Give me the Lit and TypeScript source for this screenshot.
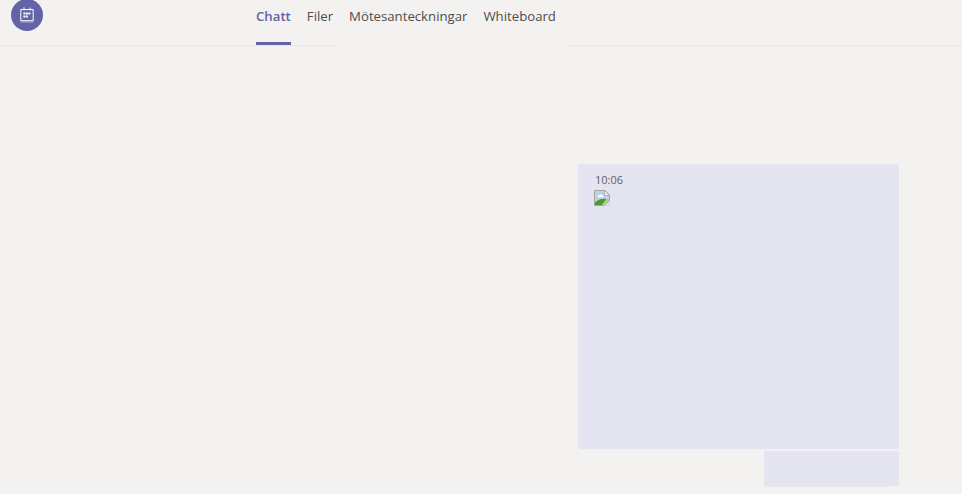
import { LitElement, html, css } from "lit";
import { customElement } from "lit/decorators.js";

@customElement("app-root")
export class AppRoot extends LitElement {
  static styles = css`
    :host {
      display: block;
      width: 962px;
      height: 494px;
      background: #f3f2f1;
      font-family: "Open Sans", "Noto Sans", sans-serif;
      overflow: hidden;
    }
    .header {
      height: 46px;
      box-sizing: border-box;
      display: flex;
      align-items: flex-start;
      position: relative;
    }
    .rule {
      position: absolute;
      left: 0;
      right: 0;
      bottom: 0;
      height: 1px;
      background: linear-gradient(to right, #e9e8e7 335px, #f3f2f1 335px, #f3f2f1 565px, #e9e8e7 565px);
    }
    .avatar {
      width: 32px;
      height: 32px;
      border-radius: 50%;
      background: #6264a7;
      margin: -1px 0 0 11px;
      display: flex;
      align-items: center;
      justify-content: center;
      flex: none;
    }
    .tabs {
      display: flex;
      gap: 16px;
      margin-left: 213px;
      height: 45px;
      position: relative;
      z-index: 1;
    }
    .tab {
      font-size: 13.2px;
      line-height: 18px;
      padding-top: 7px;
      color: #4f4d4b;
      box-sizing: border-box;
    }
    .tab.active {
      color: #6264a7;
      font-weight: 600;
      border-bottom: 3px solid #6264a7;
    }
    .main {
      display: flex;
      flex-direction: column;
      align-items: flex-end;
      gap: 2px;
      padding: 118px 63px 0 0;
    }
    .bubble {
      background: #e5e5f1;
      border-radius: 2px;
      box-sizing: border-box;
    }
    .big {
      width: 321px;
      height: 285px;
      padding: 8px 16px;
    }
    .small {
      width: 135px;
      height: 36px;
      position: relative;
      border-bottom-right-radius: 0;
    }
    .small::after {
      content: "";
      position: absolute;
      right: 0;
      bottom: 0;
      width: 11px;
      height: 1px;
      background: #f3f2f1;
    }
    .time {
      font-size: 11px;
      line-height: 16px;
      color: #605e5c;
      padding-left: 1px;
    }
    .broken {
      display: block;
      margin-top: 2px;
    }
  `;

  render() {
    return html`
      <div class="header">
        <div class="avatar">
          <svg width="16" height="16" viewBox="0 0 16 16" fill="none">
            <path d="M1.8 2.500h12.400v11.200H1.800z" stroke="#fff" stroke-width="1"/>
            <path d="M1.500 15h13" stroke="#fff" stroke-width="0.7" opacity="0.7"/>
            <path d="M5 .5v3M11 .5v3" stroke="#fff" stroke-width="1"/>
            <path d="M4.400 5.500h2v2h-2zM6.900 5.500h2v2h-2zM9.400 5.500h2v2h-2zM4.400 8.500h2v2h-2zM6.900 8.500h2v2h-2z" fill="#fff"/>
          </svg>
        </div>
        <div class="tabs">
          <div class="tab active">Chatt</div>
          <div class="tab">Filer</div>
          <div class="tab">Mötesanteckningar</div>
          <div class="tab">Whiteboard</div>
        </div>
        <div class="rule"></div>
      </div>
      <div class="main">
        <div class="bubble big">
          <div class="time">10:06</div>
          <svg class="broken" width="16" height="16" viewBox="0 0 16 16">
            <path d="M0 0h11l5 5v11H0z" fill="#bcd2ec"/>
            <path d="M.5 15.500V.5h10.300l4.700 4.700v5.500" fill="none" stroke="#a3a3a3"/>
            <path d="M10.500 .5v5h5z" fill="#f2f2f2" stroke="#a3a3a3" stroke-width="0.8"/>
            <path d="M3.500 6.500c0-1 1-1.500 1.900-1.200C6 4.300 8 4.300 8.500 5.500c1 0 1.500 1 .8 1.700H4z" fill="#fff"/>
            <path d="M1 15v-2.500C4 9.500 8 8 12.500 9L8 15z" fill="#4b9a2a"/>
            <path d="M12.500 9L15 10v1.500L11.500 15H8z" fill="#a7cf92"/>
            <path d="M.5 15.500h9" stroke="#a3a3a3"/>
            <path d="M15.500 11.500L11.500 15.500h4z" fill="#e5e5f1"/>
          </svg>
        </div>
        <div class="bubble small"></div>
      </div>
    `;
  }
}
